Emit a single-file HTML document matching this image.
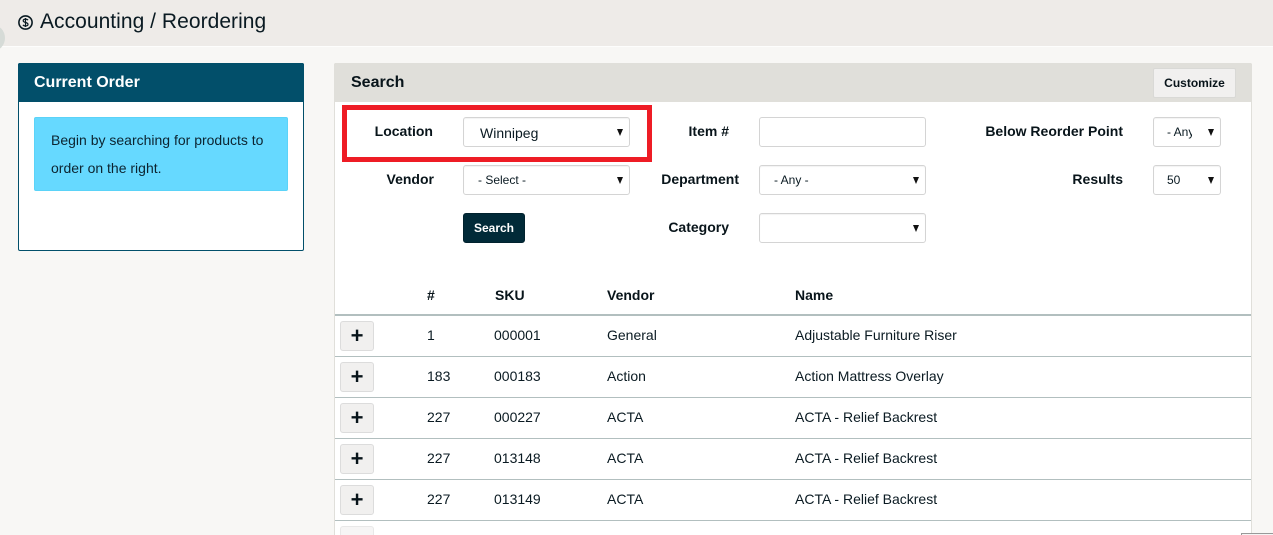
<!DOCTYPE html>
<html><head><meta charset="utf-8">
<style>
html,body{margin:0;padding:0;width:1273px;height:535px;overflow:hidden;background:#f8f7f5;}
body{position:relative;font-family:"Liberation Sans",Arial,sans-serif;font-size:14px;color:#0a1a22;}
.a{position:absolute;box-sizing:border-box;}
.t{position:absolute;white-space:nowrap;line-height:20px;height:20px;}
.b{font-weight:bold;color:#08141a;}
.r{text-align:right;}
.sel{position:absolute;box-sizing:border-box;height:30px;background:#fff;border:1px solid #d4d4d4;border-radius:3px;box-shadow:inset 0 1px 1px rgba(0,0,0,.05);font-size:12px;line-height:28px;overflow:hidden;white-space:nowrap;}
.sel i{position:absolute;top:11px;width:0;height:0;border-left:3.5px solid transparent;border-right:3.5px solid transparent;border-top:7px solid #111;}
.sel span{position:absolute;top:0;left:14px;}
.line{position:absolute;left:335px;width:916px;height:1px;background:#b2bfbf;}
.pb{position:absolute;box-sizing:border-box;left:340px;width:34px;height:30px;background:#f1f0ef;border:1px solid #dcdcdc;border-radius:3px;font-size:22px;font-weight:bold;line-height:28px;text-align:center;color:#08141a;}
</style></head><body>

<div class="a" style="left:0;top:0;width:1273px;height:46px;background:#eeebe8;"></div>
<div class="a" style="left:0;top:46px;width:1273px;height:1px;background:#fdfdfc;"></div>
<div class="a" style="left:-19px;top:25px;width:24px;height:26px;border-radius:50%;background:#d6dbd7;"></div>

<svg class="a" style="left:18px;top:15px;" width="15" height="15" viewBox="0 0 15 15">
<circle cx="7.5" cy="7.5" r="6.6" fill="none" stroke="#0a1a22" stroke-width="1.6"/>
<path d="M10 5.2C9.5 4.4 8.6 4.1 7.5 4.1 6.2 4.1 5.2 4.7 5.2 5.8 5.2 8 10 7 10 9.3 10 10.4 8.9 11 7.5 11 6.3 11 5.4 10.6 5 9.8M7.5 3V12" fill="none" stroke="#0a1a22" stroke-width="1.2"/>
</svg>
<div class="t" style="left:40px;top:10px;height:24px;line-height:24px;font-size:21px;letter-spacing:.04px;color:#0a1a22;">Accounting / Reordering</div>

<!-- Left panel -->
<div class="a" style="left:18px;top:63px;width:286px;height:188px;background:#fff;border:1px solid #024f6a;border-radius:2px;"></div>
<div class="a" style="left:18px;top:63px;width:286px;height:39px;background:#024f6a;border-radius:2px 2px 0 0;"></div>
<div class="t" style="left:34px;top:73px;font-size:16px;font-weight:bold;color:#fff;">Current Order</div>
<div class="a" style="left:34px;top:117px;width:254px;height:74px;background:#66d9ff;border:1px solid #5bd3f8;border-radius:2px;"></div>
<div class="t" style="left:51px;top:130px;color:#0c2430;">Begin by searching for products to</div>
<div class="t" style="left:51px;top:158px;color:#0c2430;">order on the right.</div>

<!-- Search panel -->
<div class="a" style="left:334px;top:63px;width:918px;height:480px;background:#fff;border:1px solid #e0dfda;border-radius:2px 2px 0 0;"></div>
<div class="a" style="left:334px;top:63px;width:918px;height:39px;background:#e0dfda;border-radius:2px 2px 0 0;"></div>
<div class="t b" style="left:351px;top:73px;font-size:16px;">Search</div>
<div class="a" style="left:1153px;top:68px;width:83px;height:30px;background:#f1f0ef;border:1px solid #d9d9d6;border-radius:2px;font-size:12px;line-height:28px;text-align:center;font-weight:bold;color:#08141a;">Customize</div>

<div class="a" style="left:342px;top:105px;width:310px;height:57px;border:5px solid #ee1c25;"></div>

<div class="t b r" style="left:333px;width:100px;top:121px;">Location</div>
<div class="sel" style="left:463px;top:117px;width:167px;font-size:14px;"><span style="left:16px;top:1px;">Winnipeg</span><i style="left:153px;"></i></div>
<div class="t b r" style="left:334px;width:100px;top:169px;">Vendor</div>
<div class="sel" style="left:463px;top:165px;width:167px;"><span>- Select -</span><i style="left:153px;"></i></div>
<div class="a" style="left:463px;top:213px;width:62px;height:30px;background:#012a38;border:1px solid #01222e;border-radius:3px;color:#fff;font-size:12px;font-weight:bold;line-height:28px;text-align:center;">Search</div>

<div class="t b r" style="left:629px;width:100px;top:121px;">Item #</div>
<div class="a" style="left:759px;top:117px;width:167px;height:30px;background:#fff;border:1px solid #d4d4d4;border-radius:3px;"></div>
<div class="t b r" style="left:639px;width:100px;top:169px;">Department</div>
<div class="sel" style="left:759px;top:165px;width:167px;"><span>- Any -</span><i style="left:153px;"></i></div>
<div class="t b r" style="left:629px;width:100px;top:217px;">Category</div>
<div class="sel" style="left:759px;top:213px;width:167px;"><i style="left:153px;"></i></div>

<div class="t b r" style="left:923px;width:200px;top:121px;">Below Reorder Point</div>
<div class="sel" style="left:1153px;top:117px;width:68px;"><span style="left:13px;width:25px;overflow:hidden;height:28px;">- Any -</span><i style="left:54px;"></i></div>
<div class="t b r" style="left:1023px;width:100px;top:169px;">Results</div>
<div class="sel" style="left:1153px;top:165px;width:68px;"><span style="left:13px;">50</span><i style="left:54px;"></i></div>

<!-- Table -->
<div class="t b" style="left:427px;top:285px;">#</div>
<div class="t b" style="left:495px;top:285px;">SKU</div>
<div class="t b" style="left:607px;top:285px;">Vendor</div>
<div class="t b" style="left:795px;top:285px;">Name</div>
<div class="line" style="top:314px;height:2px;"></div>

<div class="pb" style="top:321px;">+</div>
<div class="t" style="left:427px;top:325px;">1</div><div class="t" style="left:494px;top:325px;">000001</div><div class="t" style="left:607px;top:325px;">General</div><div class="t" style="left:795px;top:325px;">Adjustable Furniture Riser</div>
<div class="line" style="top:356px;"></div>

<div class="pb" style="top:362px;">+</div>
<div class="t" style="left:427px;top:366px;">183</div><div class="t" style="left:494px;top:366px;">000183</div><div class="t" style="left:607px;top:366px;">Action</div><div class="t" style="left:795px;top:366px;">Action Mattress Overlay</div>
<div class="line" style="top:397px;"></div>

<div class="pb" style="top:403px;">+</div>
<div class="t" style="left:427px;top:407px;">227</div><div class="t" style="left:494px;top:407px;">000227</div><div class="t" style="left:607px;top:407px;">ACTA</div><div class="t" style="left:795px;top:407px;">ACTA - Relief Backrest</div>
<div class="line" style="top:438px;"></div>

<div class="pb" style="top:444px;">+</div>
<div class="t" style="left:427px;top:448px;">227</div><div class="t" style="left:494px;top:448px;">013148</div><div class="t" style="left:607px;top:448px;">ACTA</div><div class="t" style="left:795px;top:448px;">ACTA - Relief Backrest</div>
<div class="line" style="top:479px;"></div>

<div class="pb" style="top:485px;">+</div>
<div class="t" style="left:427px;top:489px;">227</div><div class="t" style="left:494px;top:489px;">013149</div><div class="t" style="left:607px;top:489px;">ACTA</div><div class="t" style="left:795px;top:489px;">ACTA - Relief Backrest</div>
<div class="line" style="top:520px;"></div>

<div class="a" style="left:340px;top:526px;width:34px;height:30px;background:#f6f5f5;border:1px solid #e8e8e8;border-radius:3px;"></div>

<div class="a" style="left:1241px;top:533px;width:32px;height:2px;background:#f4f4f4;border-top:1px solid #999;border-left:1px solid #999;"></div>
</body></html>
